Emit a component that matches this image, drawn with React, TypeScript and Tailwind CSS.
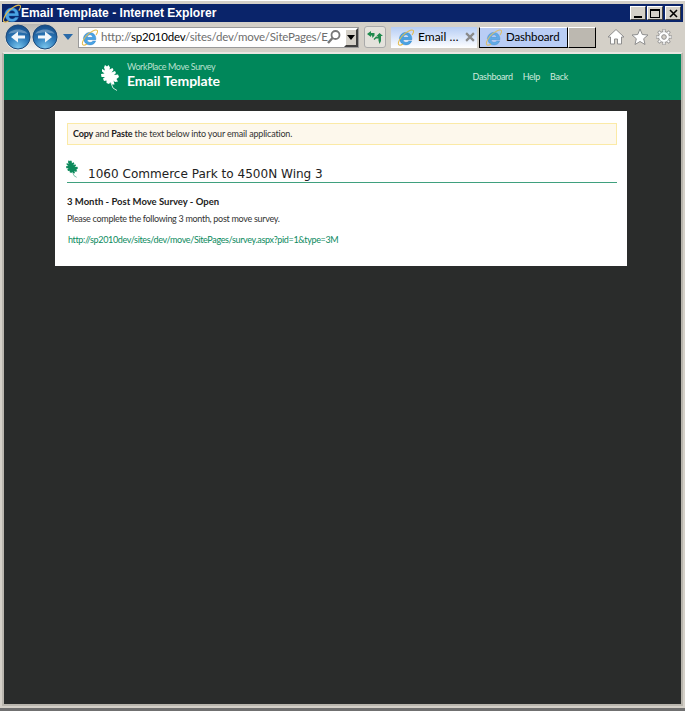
import React from "react";

const Ie = ({ size = 18, faded = false }: { size?: number; faded?: boolean }) => (
  <svg width={size} height={size} viewBox="0 0 20 20" className="shrink-0" style={{ opacity: faded ? 0.8 : 1 }}>
    <path d="M2.800 11.400C3 7.200 6.300 4 10.300 4c4.200 0 7.200 3.300 7.200 7.500v1H7.300c.1 2 1.500 3.200 3.400 3.200 1.400 0 2.500-.6 3.200-1.700h3.400c-1 3-3.500 4.700-6.700 4.700-4.300 0-7.300-3.200-7.300-7.300Zm4.600-1.600h6.300c-.2-1.800-1.400-2.900-3.100-2.900-1.700 0-3 1.100-3.200 2.900Z" fill="#4aa3e4" stroke="#1f6fb5" strokeWidth=".4" />
    <path d="M2 18.400C.4 16.600 4 9.500 9 5.500 13.500 2 18 .4 19.200 1.800c.8 1.100-.2 3.200-1.500 5.200M2 18.400c.9 1.100 3.200.5 5-.7" fill="none" stroke="#e3bb4c" strokeWidth="1.200" />
  </svg>
);

const Leaf = ({ color, className }: { color: string; className: string }) => (
  <svg viewBox="0 0 18 26" className={className}>
    <path
      d="M4 0 6 1.500 7.500 0 9 2.500 8.500 4.500 11.500 3 12.500 5 10.500 7.500 14 6 15 8 13 10 17 9.500 18 12 15.500 14 17 16.500 14 17 12.500 15.500 13.500 19.500 11 19.500 9.500 17 8 19 5.500 18 5.500 15.500 3 16 2 13.500 4 12 .5 12 0 9 3.500 8.500 1 6.500 1 4 4 5.500 3 2.500Z"
      fill={color}
    />
    <path d="M7 8 10 18 12 23 16 25.500" fill="none" stroke={color} strokeWidth=".8" />
  </svg>
);

const NavButton = ({ right = false }: { right?: boolean }) => (
  <svg width="26" height="26" viewBox="0 0 26 26" className="shrink-0 relative">
    <defs>
      <radialGradient id={right ? "nr" : "nl"} cx=".5" cy=".95" r=".9">
        <stop offset="0" stopColor="#79c6ee" />
        <stop offset=".55" stopColor="#2b78b8" />
        <stop offset="1" stopColor="#17508c" />
      </radialGradient>
    </defs>
    <circle cx="13" cy="13" r="12" fill={`url(#${right ? "nr" : "nl"})`} stroke="#1d4a7a" />
    <path d="M3.500 10C6 4 20 4 22.500 10 17 8 9 8 3.500 10Z" fill="#ffffff" opacity=".3" />
    <path
      d={right ? "M6 11.500h7V7.500l7 5.500-7 5.500v-4H6Z" : "M20 11.500h-7V7.500l-7 5.500 7 5.500v-4h7Z"}
      fill="#f2f6fa"
    />
  </svg>
);

const WinBtn = ({ children }: { children: React.ReactNode }) => (
  <div className="w-4 h-[14px] bg-[#d4d0c8] border border-t-white border-l-white border-r-[#404040] border-b-[#404040] flex items-center justify-center">
    {children}
  </div>
);

export default function App() {
  return (
    <div className="w-[685px] h-[711px] bg-[#d4d0c8] flex flex-col overflow-hidden font-['Lato',sans-serif]">
      <div className="h-1 bg-[#d4d0c8] border-t border-white shrink-0" />
      <div className="h-[18px] mx-[2px] bg-[#0a246a] flex items-center justify-between pr-[2px] shrink-0">
        <div className="flex items-center">
          <Ie size={19} />
          <span className="text-white font-bold text-[12.100px] font-['Liberation_Sans',sans-serif] leading-none whitespace-nowrap">
            Email Template - Internet Explorer
          </span>
        </div>
        <div className="flex gap-[1px] items-center">
          <WinBtn>
            <div className="w-2 h-[2px] bg-black mt-[7px] mr-[1px]" />
          </WinBtn>
          <WinBtn>
            <div className="w-[10px] h-[9px] border border-black border-t-2" />
          </WinBtn>
          <div className="ml-[1px]">
            <WinBtn>
              <svg width="9" height="9" viewBox="0 0 9 9">
                <path d="M1 1 8 8M8 1 1 8" stroke="#000" strokeWidth="1.600" />
              </svg>
            </WinBtn>
          </div>
        </div>
      </div>
      <div className="h-[30px] flex items-center pl-[5px] shrink-0">
        <div className="flex gap-[1px] rounded-full bg-gradient-to-b from-[#b9b7b2] to-[#f4f3f0]">
          <NavButton />
          <NavButton right />
        </div>
        <svg width="10" height="6" viewBox="0 0 10 6" className="ml-[5px] mr-[5px] shrink-0">
          <path d="M0 0h10L5 6Z" fill="#2a6aa8" />
        </svg>
        <div className="w-[281px] h-[21px] bg-white border border-[#9a9a9a] flex items-center pl-[2px] relative">
          <Ie size={17} />
          <div className="ml-[3px] w-[224px] whitespace-nowrap text-[11.500px] tracking-[-0.2px] leading-[16px] text-[#6d6d6d]">
            http://<span className="text-black">sp2010dev</span>/sites/dev/move/SitePages/E
          </div>
          <svg width="16" height="16" viewBox="0 0 16 16" className="ml-[1px]">
            <circle cx="9.500" cy="6" r="4" fill="none" stroke="#777" strokeWidth="1.800" />
            <path d="M6.500 9 2 14" stroke="#777" strokeWidth="2.400" />
          </svg>
          <div className="absolute right-0 top-0 bottom-0 w-[14px] bg-[#d4d0c8] border-2 border-t-white border-l-white border-r-[#404040] border-b-[#404040] flex items-center justify-center">
            <svg width="8" height="5" viewBox="0 0 8 5">
              <path d="M0 0h8L4 5Z" fill="#000" />
            </svg>
          </div>
        </div>
        <div className="ml-[5px] w-[22px] h-[22px] rounded-[3px] border border-[#aaa] bg-[#e4e2dc] flex items-center justify-center shrink-0">
          <svg width="16" height="14" viewBox="0 0 16 14">
            <path d="M0 4 4 1v2h3.500v2.500L5.500 8 5 5.500H4V7Z" fill="#1f8a4d" />
            <path d="M6.500 9 9 6.500h2V6H9.500L12.500 3 16 6h-2v5l-1.500 3-1-3.500V8.500H9L7.500 10Z" fill="#1f8a4d" />
          </svg>
        </div>
        <div className="ml-[5px] h-[21px] w-[86px] flex items-center pl-[6px] bg-gradient-to-b from-[#b6cdf4] to-white shrink-0">
          <Ie size={17} />
          <span className="ml-[4px] text-[12px] leading-none text-black whitespace-nowrap">Email …</span>
          <svg width="10" height="10" viewBox="0 0 9 9" className="ml-[7px] shrink-0">
            <path d="M1 1 8 8M8 1 1 8" stroke="#8a8a8a" strokeWidth="2" />
          </svg>
        </div>
        <div className="ml-[2px] h-[21px] w-[89px] flex items-center pl-[5px] bg-[#b9cdf5] border border-l-black border-b-black border-r-black border-t-white shrink-0">
          <Ie size={17} faded />
          <span className="ml-[4px] text-[11.500px] tracking-[-0.15px] leading-none text-black">Dashboard</span>
        </div>
        <div className="h-[21px] w-[28px] bg-[#bcb8b0] border border-t-white border-l-white border-r-black border-b-black shrink-0" />
        <div className="ml-[11px] flex items-center gap-[6px] shrink-0">
          <svg width="18" height="18" viewBox="0 0 18 18">
            <path d="M9 1.500 1 9h2.500v7h4v-5h3v5h4V9H17Z" fill="#fff" stroke="#8e8e8e" strokeWidth="1" />
          </svg>
          <svg width="18" height="18" viewBox="0 0 18 18">
            <path d="M9 1 11.300 6.500 17 7 12.700 10.700 14 16.500 9 13.500 4 16.500 5.300 10.700 1 7 6.700 6.500Z" fill="#fff" stroke="#8e8e8e" strokeWidth="1" />
          </svg>
          <svg width="18" height="18" viewBox="0 0 18 18">
            <path d="M9 1v3M9 14v3M1 9h3M14 9h3M3.300 3.300l2.100 2.100M12.600 12.600l2.100 2.100M14.700 3.300l-2.100 2.100M5.400 12.600l-2.100 2.100" stroke="#8e8e8e" strokeWidth="3" />
            <circle cx="9" cy="9" r="5.500" fill="#fff" stroke="#8e8e8e" />
            <path d="M9 1.500v2.500M9 14v2.500M1.500 9h2.500M14 9h2.500M3.700 3.700l1.700 1.700M12.600 12.600l1.700 1.700M14.300 3.700l-1.700 1.700M5.400 12.600l-1.700 1.700" stroke="#fff" strokeWidth="1.500" />
            <circle cx="9" cy="9" r="2.300" fill="#d4d0c8" stroke="#8e8e8e" />
          </svg>
        </div>
      </div>
      <div className="flex-1 mx-[2px] border-2 border-[#b9b6ae] border-t-[#e8e6e1] flex flex-col min-h-0">
        <div className="h-[46px] bg-[#00875a] shrink-0 flex items-center text-white">
          <Leaf color="#ffffff" className="w-[18px] h-[26px] ml-[97px] mt-[1px] shrink-0" />
          <div className="ml-[8px] flex flex-col mt-[-7px]">
            <span className="text-[9px] tracking-[-0.4px] leading-[13px] text-[#b8e0cf] whitespace-nowrap">WorkPlace Move Survey</span>
            <span className="text-[14px] tracking-[-0.05px] leading-[15px] font-bold whitespace-nowrap">Email Template</span>
          </div>
          <div className="ml-auto mr-[113px] flex gap-[10px] text-[9px] tracking-[-0.3px] text-[#cfeade] whitespace-nowrap">
            <span>Dashboard</span>
            <span>Help</span>
            <span>Back</span>
          </div>
        </div>
        <div className="flex-1 bg-[#2a2c2b] pt-[11px] px-[51px]">
          <div className="bg-white h-[155px] w-[572px] pl-3 pr-[10px] pt-3">
            <div className="h-[22px] bg-[#fdf8ec] border border-[#fbeaa6] flex items-center pl-[5px] text-[9px] tracking-[-0.18px] text-[#333] whitespace-nowrap">
              <span>
                <b className="font-bold text-[#222]">Copy</b> and <b className="font-bold text-[#222]">Paste</b> the text below into your email application.
              </span>
            </div>
            <div className="mt-[18px] h-[20px] border-b border-[#3fa07e] flex items-start">
              <Leaf color="#0d8a5c" className="w-[12px] h-[18px] shrink-0 mt-[-3px] -ml-[1px]" />
              <span className="ml-[10px] mt-[2px] text-[12.050px] leading-[18px] text-[#222] font-['DejaVu_Sans',sans-serif] whitespace-nowrap">
                1060 Commerce Park to 4500N Wing 3
              </span>
            </div>
            <div className="mt-[12px] text-[9.500px] leading-[13px] font-bold text-[#222] whitespace-nowrap">3 Month - Post Move Survey - Open</div>
            <div className="mt-[4px] text-[9px] tracking-[-0.3px] leading-[13px] text-[#333] whitespace-nowrap">Please complete the following 3 month, post move survey.</div>
            <div className="mt-[8px] ml-[1px] text-[9px] tracking-[-0.35px] leading-[13px] text-[#0b8a60] whitespace-nowrap">http://sp2010dev/sites/dev/move/SitePages/survey.aspx?pid=1&amp;type=3M</div>
          </div>
        </div>
      </div>
      <div className="h-[2px] shrink-0" />
      <div className="h-[3px] bg-[#707070] shrink-0" />
    </div>
  );
}
